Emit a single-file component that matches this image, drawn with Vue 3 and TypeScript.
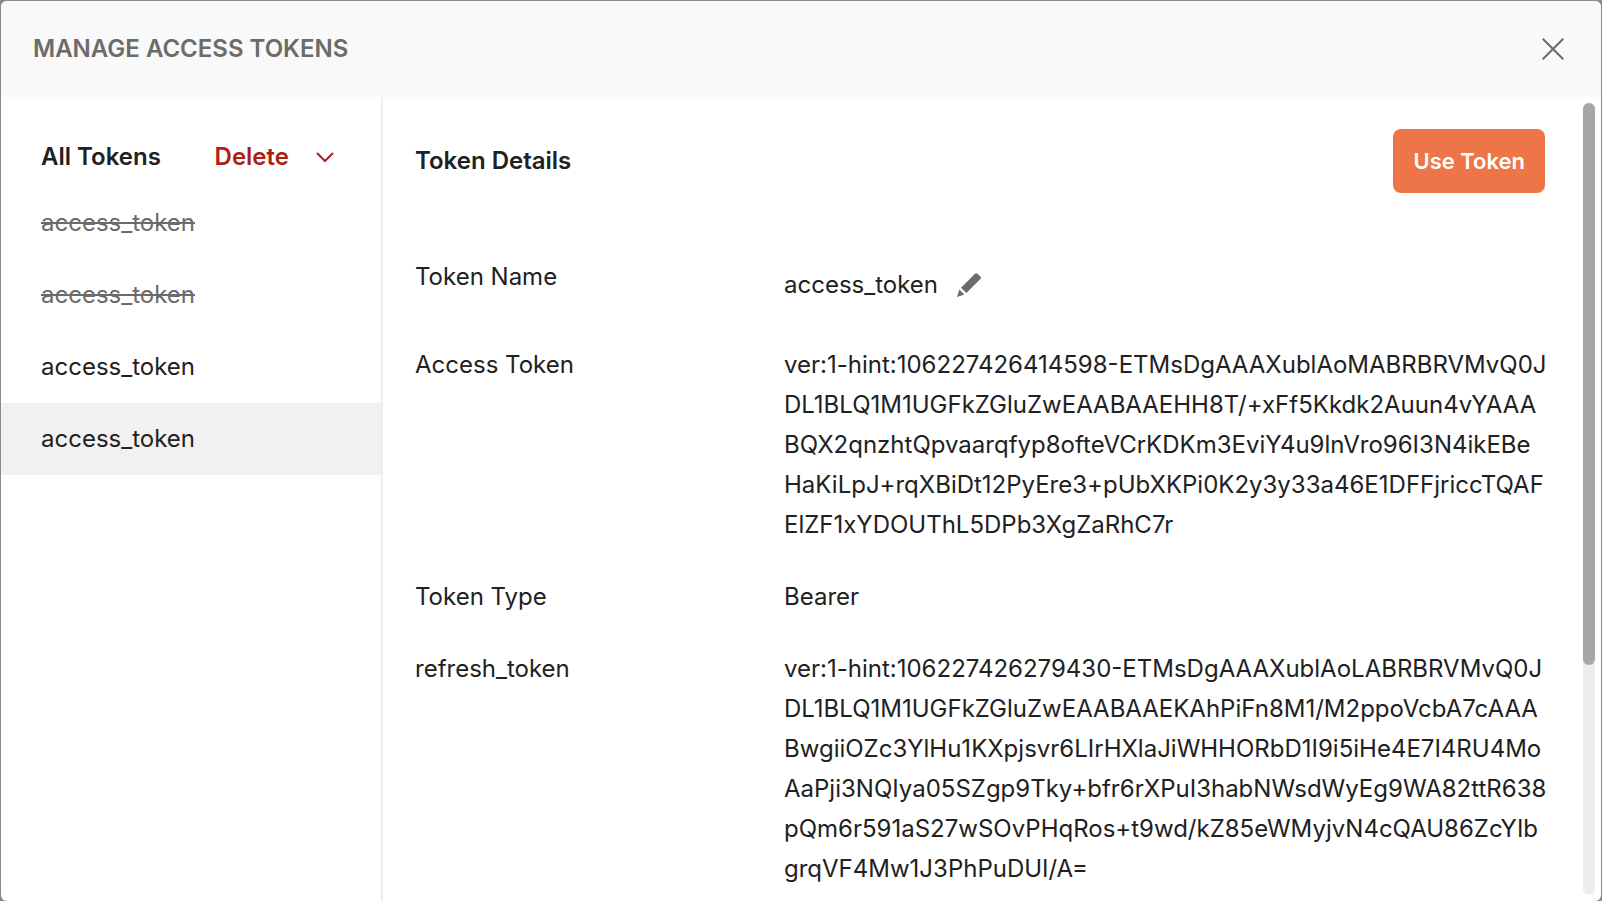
<script setup lang="ts">
import { ref } from 'vue'

interface TokenItem {
  id: number
  name: string
  expired: boolean
}

const tokens: TokenItem[] = [
  { id: 1, name: 'access_token', expired: true },
  { id: 2, name: 'access_token', expired: true },
  { id: 3, name: 'access_token', expired: false },
  { id: 4, name: 'access_token', expired: false },
]

const selectedId = ref(4)

const accessToken: string = [
  'ver:1-hint:106227426414598-ETMsDgAAAXublAoMABRBRVMvQ0J',
  'DL1BLQ1M1UGFkZGluZwEAABAAEHH8T/+xFf5Kkdk2Auun4vYAAA',
  'BQX2qnzhtQpvaarqfyp8ofteVCrKDKm3EviY4u9lnVro96I3N4ikEBe',
  'HaKiLpJ+rqXBiDt12PyEre3+pUbXKPi0K2y3y33a46E1DFFjriccTQAF',
  'ElZF1xYDOUThL5DPb3XgZaRhC7r',
].join('\n')

const refreshToken: string = [
  'ver:1-hint:106227426279430-ETMsDgAAAXublAoLABRBRVMvQ0J',
  'DL1BLQ1M1UGFkZGluZwEAABAAEKAhPiFn8M1/M2ppoVcbA7cAAA',
  'BwgiiOZc3YlHu1KXpjsvr6LIrHXlaJiWHHORbD1I9i5iHe4E7I4RU4Mo',
  'AaPji3NQIya05SZgp9Tky+bfr6rXPuI3habNWsdWyEg9WA82ttR638',
  'pQm6r591aS27wSOvPHqRos+t9wd/kZ85eWMyjvN4cQAU86ZcYIb',
  'grqVF4Mw1J3PhPuDUI/A=',
].join('\n')
</script>

<template>
  <div class="backdrop">
    <section class="modal" role="dialog" aria-labelledby="modal-title">
      <header class="modal-header">
        <h1 id="modal-title">MANAGE ACCESS TOKENS</h1>
        <button class="icon-button" type="button" aria-label="Close">
          <svg width="22" height="22" viewBox="0 0 22 22" fill="none" stroke="#6b6b6b" stroke-width="2">
            <path d="M.7 .7 21.3 21.3M21.3 .7 .7 21.3" />
          </svg>
        </button>
      </header>

      <div class="modal-body">
        <aside class="sidebar">
          <div class="sidebar-header">
            <h2>All Tokens</h2>
            <button class="delete" type="button">
              Delete
              <svg width="18" height="11" viewBox="0 0 18 11" fill="none" stroke="#ad1f15" stroke-width="2">
                <path d="M1 1 9 9 17 1" />
              </svg>
            </button>
          </div>
          <ul class="token-list">
            <li v-for="token in tokens" :key="token.id">
              <button
                type="button"
                class="token"
                :class="{ expired: token.expired, selected: token.id === selectedId }"
                @click="selectedId = token.id"
              >{{ token.name }}</button>
            </li>
          </ul>
        </aside>

        <main class="details">
          <div class="details-header">
            <h2>Token Details</h2>
            <button class="primary" type="button">Use Token</button>
          </div>
          <dl class="fields">
            <dt>Token Name</dt>
            <dd class="editable">
              access_token
              <button class="icon-button" type="button" aria-label="Edit token name">
                <svg width="24" height="24" viewBox="0 0 24 24" fill="#6b6b6b">
                  <path d="M4 14.700 18 .7Q19.300-.4 20.600 .7L23.400 3.500Q24.500 4.800 23.400 6L9.400 20.100Z" />
                  <path d="M2.400 16.600 7.400 21.600 0 24Z" />
                </svg>
              </button>
            </dd>
            <dt>Access Token</dt>
            <dd>{{ accessToken }}</dd>
            <dt>Token Type</dt>
            <dd>Bearer</dd>
            <dt>refresh_token</dt>
            <dd>{{ refreshToken }}</dd>
          </dl>
        </main>

        <div class="scroll-track" aria-hidden="true">
          <div class="scroll-thumb"></div>
        </div>
      </div>
    </section>
  </div>
</template>

<style>
body {
  margin: 0;
}
</style>

<style scoped>
.backdrop {
  box-sizing: border-box;
  height: 100vh;
  padding: 1px 1px 0;
  background: #8c8a8a;
  color: #212121;
  font: 400 24px/40px Inter, "Liberation Sans", sans-serif;
}

.modal {
  display: flex;
  flex-direction: column;
  height: 100%;
  overflow: hidden;
  border-radius: 6px;
  background: #fff;
}

.modal-header {
  display: flex;
  flex: none;
  align-items: center;
  justify-content: space-between;
  height: 96px;
  box-sizing: border-box;
  padding: 0 37px 0 32px;
  background: #f9f9f9;
}

h1,
h2 {
  margin: 0;
  font-size: 24px;
  font-weight: 600;
}

h1 {
  color: #6b6b6b;
}

button {
  border: 0;
  padding: 0;
  background: none;
  color: inherit;
  font: inherit;
  cursor: pointer;
}

.icon-button {
  display: flex;
}

.modal-body {
  display: flex;
  flex: 1;
  min-height: 0;
}

.sidebar {
  flex: none;
  width: 380px;
  border-right: 2px solid #ededed;
}

.sidebar-header {
  display: flex;
  align-items: center;
  justify-content: space-between;
  height: 90px;
  box-sizing: border-box;
  padding: 30px 47px 0 40px;
}

.delete {
  display: flex;
  align-items: center;
  gap: 27px;
  color: #ad1f15;
  font-weight: 600;
}

.token-list {
  margin: 0;
  padding: 0;
  list-style: none;
}

.token {
  display: block;
  width: 100%;
  padding: 16px 40px;
  text-align: left;
}

.expired {
  color: #6b6b6b;
  text-decoration: line-through;
}

.selected {
  background: #f1f1f1;
}

.details {
  flex: 1;
  min-width: 0;
  overflow: hidden;
  padding: 32px 32px 0;
}

.details-header {
  display: flex;
  align-items: center;
  justify-content: space-between;
}

.primary {
  height: 64px;
  padding: 0 20px;
  border-radius: 8px;
  background: #ed7547;
  color: #fff;
  font-size: 22px;
  font-weight: 600;
}

.fields {
  display: grid;
  grid-template-columns: 369px 1fr;
  row-gap: 32px;
  margin: 64px 0 0;
}

dd {
  margin: 0;
  white-space: pre;
}

.editable {
  display: flex;
  align-items: center;
  gap: 19px;
  height: 56px;
  white-space: normal;
}

.scroll-track {
  flex: none;
  width: 12px;
  margin: 6px;
  border-radius: 6px;
  background: #ededed;
}

.scroll-thumb {
  height: 71%;
  border-radius: 6px;
  background: #a6a6a6;
}
</style>
